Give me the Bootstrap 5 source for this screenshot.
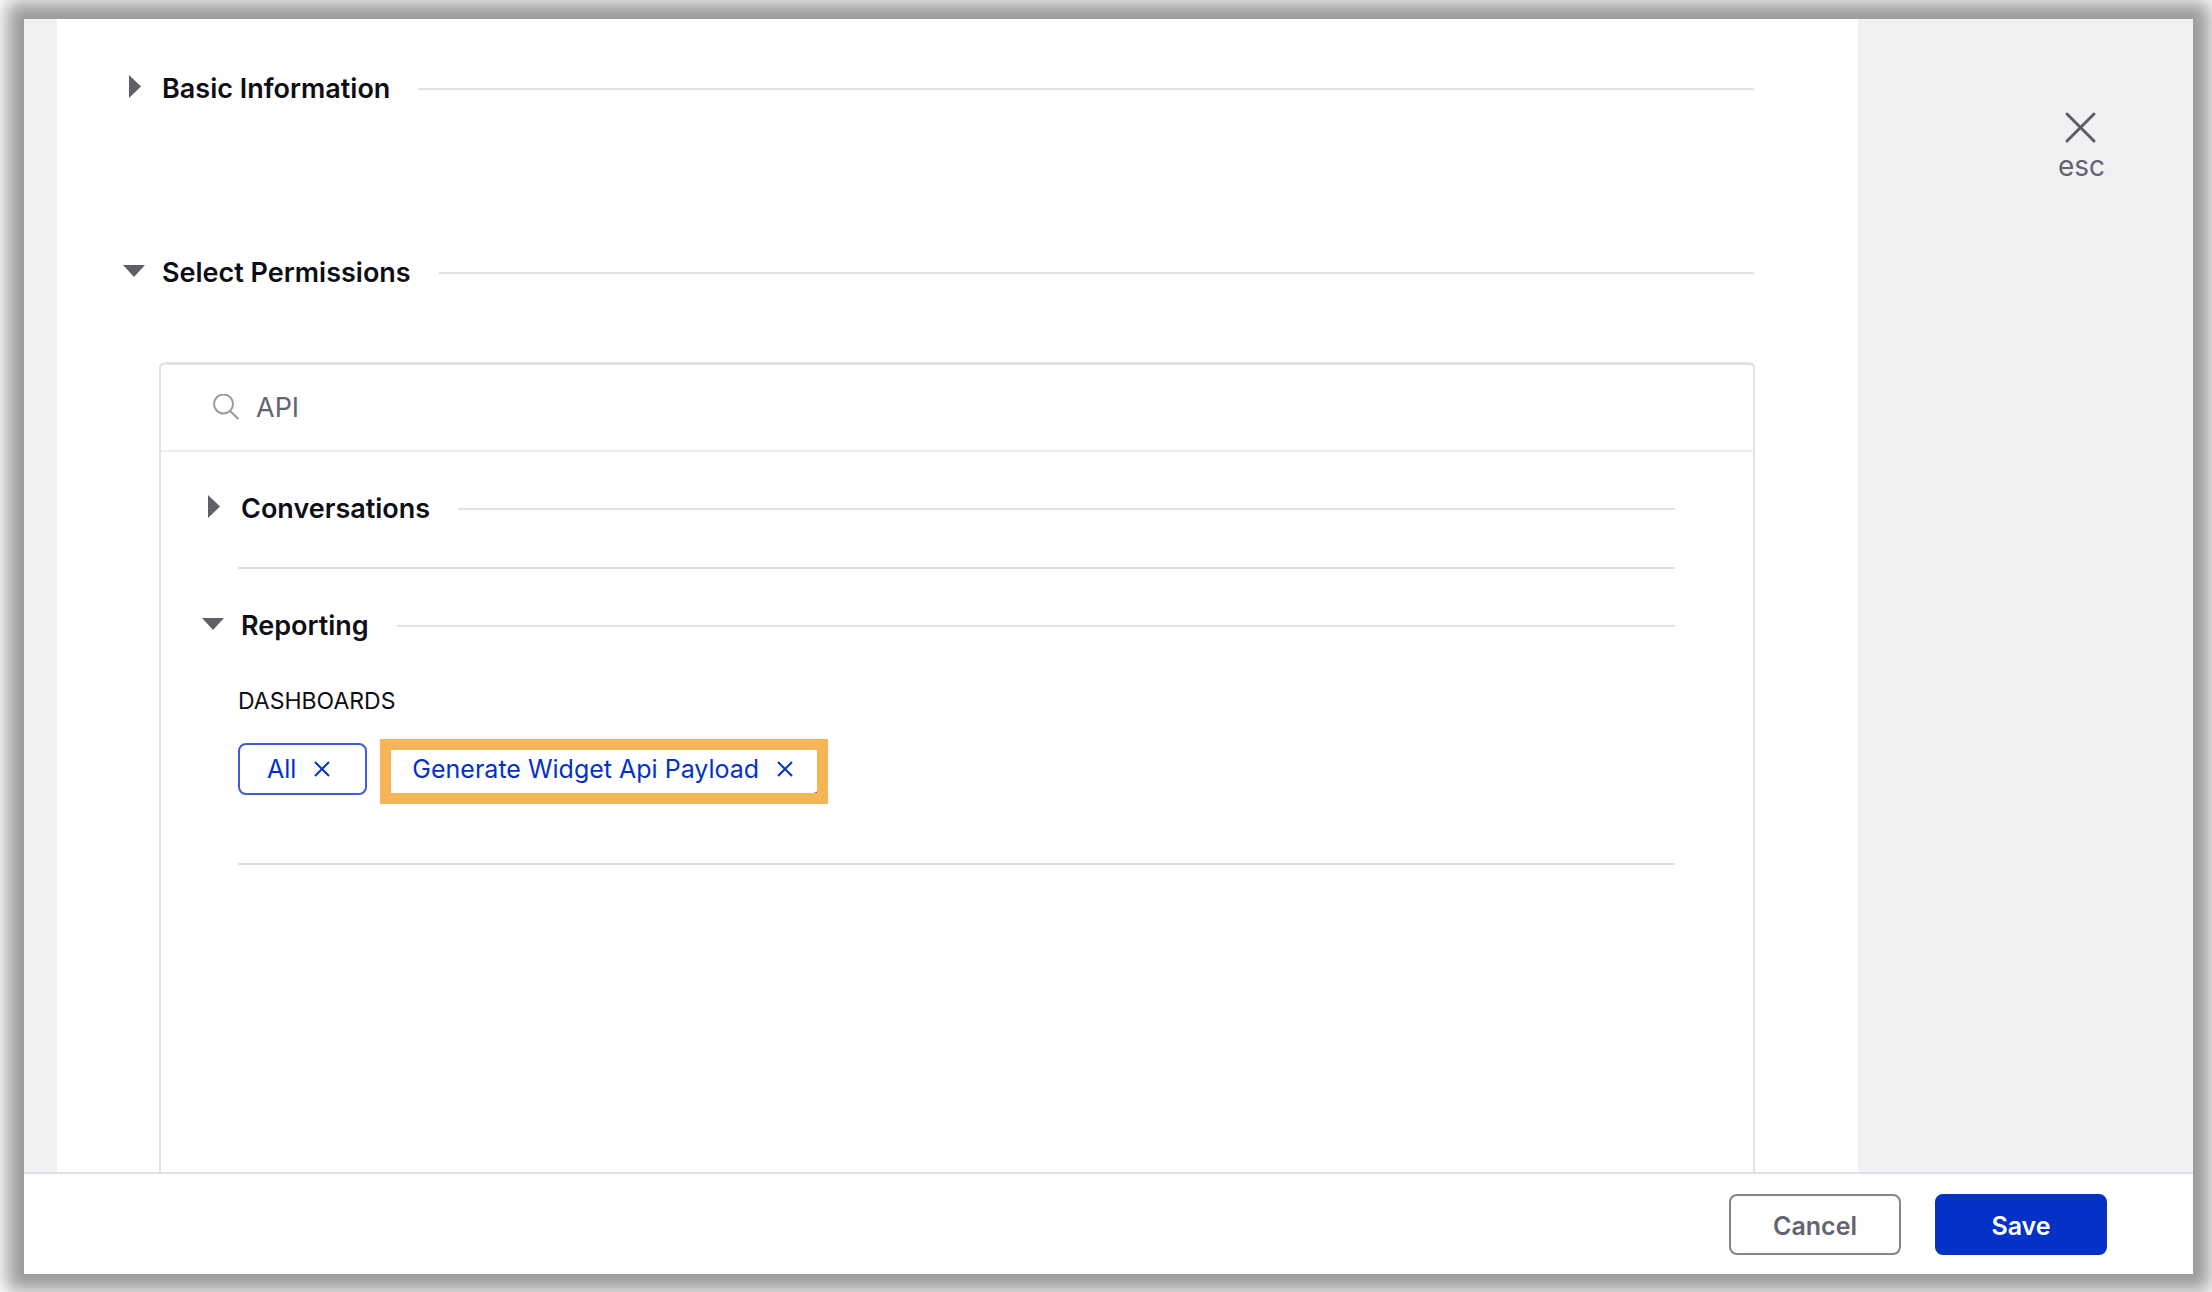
<!DOCTYPE html>
<html lang="en">
<head>
<meta charset="utf-8">
<meta name="viewport" content="width=device-width, initial-scale=1">
<title>Select Permissions</title>
<link href="https://cdn.jsdelivr.net/npm/bootstrap@5.3.0/dist/css/bootstrap.min.css" rel="stylesheet">
<style>
  :root { --rule: #e1e1e6; --ink: #0e0e16; --muted-ink: #646470; --blue: #0431c6; }
  body { font-family: Inter, "Liberation Sans", sans-serif; color: var(--ink); padding: 19px 19px 18px 24px; }
  .dialog-window { box-shadow: 0 0 18px 17px rgba(0, 0, 0, .4); }
  .backdrop-area { background: #f1f1f4; padding-left: 33px; min-height: 0; }
  .form-panel { padding: 50px 104px 0 65px; }
  .side-strip { width: 335px; padding-top: 88px; padding-right: 88px; }
  .section-toggle { height: 40px; gap: 16px; font-size: 27px; line-height: 40px; font-weight: 600; color: var(--ink); }
  .section-toggle::after { content: ""; flex: 1; height: 2px; margin-left: 12px; background: var(--rule); }
  .section-toggle svg { width: 24px; height: 40px; fill: #5f5f6a; flex: none; }
  .section-gap { margin-top: 144px; }
  .permission-box { margin: 69px 0 0 37px; border: 2px solid #e1e1e6; border-top-width: 3px; border-bottom: 0; border-radius: 6px 6px 0 0; margin-right: -1px; }
  .search-row { height: 87px; padding-left: 51px; gap: 16px; border-bottom: 2px solid #ededf1; }
  .search-row input { font-size: 27px; line-height: 36px; color: var(--muted-ink); outline: 0; }
  .permission-body { padding: 37px 78px 0 40px; }
  .group-rule { height: 2px; background: #dddde1; margin: 38px 0 37px 37px; }
  .last-rule { margin-top: 68px; }
  .group-content { padding: 37px 0 0 37px; }
  .group-title { font-size: 23px; line-height: 36px; font-weight: 400; }
  .chip { height: 52px; border: 2px solid #3f5cd6; border-radius: 8px; padding: 0 35px 0 27px; gap: 18px; font-size: 25px; line-height: 36px; color: var(--blue); background: #fff; }
  .chip.chip-marked { padding-right: 26px; }
  .chip svg { width: 16px; height: 16px; stroke: currentColor; stroke-width: 2; }
  .highlight-frame { inset: -4px -7px -9px -3px; border: 11px solid #f5b556; pointer-events: none; }
  .esc-btn { font-size: 28px; line-height: 36px; color: var(--muted-ink); gap: 1px; }
  .action-bar { height: 102px; padding: 0 86px; gap: 34px; border-top: 2px solid #dfdfe5; }
  .action-btn { width: 172px; height: 61px; padding: 4px 0 0; font-size: 25px; line-height: 36px; font-weight: 600; border: 2px solid #85858d; border-radius: 8px; color: var(--muted-ink); background: #fff; }
  .action-btn.save-btn { background: var(--blue); border-color: var(--blue); color: #fff; }
</style>
<script src="https://cdn.jsdelivr.net/npm/bootstrap@5.3.0/dist/js/bootstrap.bundle.min.js"></script>
</head>
<body class="vh-100 overflow-hidden bg-white">
<div class="dialog-window d-flex flex-column h-100 bg-white">
  <div class="backdrop-area d-flex flex-grow-1">
    <main class="form-panel d-flex flex-column flex-grow-1 bg-white">
      <button type="button" class="section-toggle btn p-0 border-0 d-flex align-items-center w-100" aria-expanded="false">
        <svg viewBox="0 0 24 40" aria-hidden="true"><path d="M7 6v23l12-11.500z"/></svg>Basic Information
      </button>
      <button type="button" class="section-toggle section-gap btn p-0 border-0 d-flex align-items-center w-100" aria-expanded="true">
        <svg viewBox="0 0 24 40" aria-hidden="true"><path d="M1 12h22L12 24z"/></svg>Select Permissions
      </button>
      <section class="permission-box flex-grow-1">
        <div class="search-row d-flex align-items-center">
          <svg width="28" height="28" viewBox="0 1 28 28" fill="none" stroke="#9a9aa2" stroke-width="2" aria-hidden="true"><circle cx="11.500" cy="11" r="9.500"/><path d="M18 18l8.500 8"/></svg>
          <input type="text" class="flex-grow-1 border-0 p-0" value="API" aria-label="Search permissions">
        </div>
        <div class="permission-body">
          <button type="button" class="section-toggle btn p-0 border-0 d-flex align-items-center w-100" aria-expanded="false">
            <svg viewBox="0 0 24 40" aria-hidden="true"><path d="M7 6v23l12-11.500z"/></svg>Conversations
          </button>
          <div class="group-rule"></div>
          <button type="button" class="section-toggle btn p-0 border-0 d-flex align-items-center w-100" aria-expanded="true">
            <svg viewBox="0 0 24 40" aria-hidden="true"><path d="M1 12h22L12 24z"/></svg>Reporting
          </button>
          <div class="group-content">
            <h2 class="group-title mb-4">DASHBOARDS</h2>
            <div class="d-flex">
              <button type="button" class="chip d-flex align-items-center me-3">All
                <svg viewBox="0 0 16 16" aria-hidden="true"><path d="M1 1l14 14M15 1L1 15"/></svg>
              </button>
              <div class="position-relative">
                <button type="button" class="chip chip-marked d-flex align-items-center">Generate Widget Api Payload
                  <svg viewBox="0 0 16 16" aria-hidden="true"><path d="M1 1l14 14M15 1L1 15"/></svg>
                </button>
                <div class="highlight-frame position-absolute"></div>
              </div>
            </div>
          </div>
          <div class="group-rule last-rule"></div>
        </div>
      </section>
    </main>
    <aside class="side-strip d-flex justify-content-end align-items-start">
      <button type="button" class="esc-btn btn p-0 border-0 d-flex flex-column align-items-center">
        <svg width="40" height="40" viewBox="0 0 40 40" fill="none" stroke="#5c5c67" stroke-width="3" stroke-linecap="round" aria-hidden="true"><path d="M6 7l27 27M33 7L6 34"/></svg>
        esc
      </button>
    </aside>
  </div>
  <footer class="action-bar d-flex justify-content-end align-items-center bg-white">
    <button type="button" class="action-btn">Cancel</button>
    <button type="button" class="action-btn save-btn">Save</button>
  </footer>
</div>
</body>
</html>
